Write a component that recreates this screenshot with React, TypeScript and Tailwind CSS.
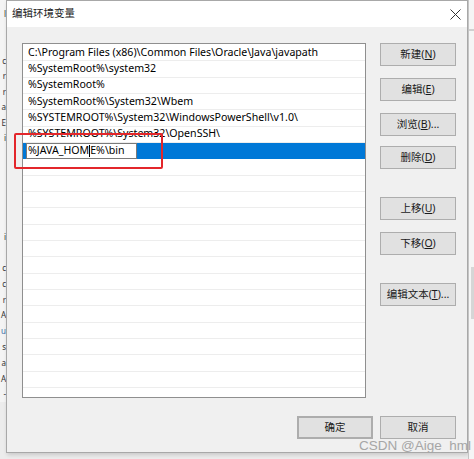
import React from "react"

const paths = [
  "C:\\Program Files (x86)\\Common Files\\Oracle\\Java\\javapath",
  "%SystemRoot%\\system32",
  "%SystemRoot%",
  "%SystemRoot%\\System32\\Wbem",
  "%SYSTEMROOT%\\System32\\WindowsPowerShell\\v1.0\\",
  "%SYSTEMROOT%\\System32\\OpenSSH\\",
]

const font = { fontFamily: '"Noto Sans", "Noto Sans CJK SC", sans-serif' }

function Btn({ children, className = "" }: { children: React.ReactNode; className?: string }) {
  return (
    <div
      className={`h-[23px] w-[76px] flex items-center justify-center bg-[#e1e1e1] border border-[#adadad] text-[10.5px] text-[#1a1a1a] ${className}`}
    >
      {children}
    </div>
  )
}

// slice of the window behind the dialog, only a few letters show
function LeftStrip() {
  const top = ["l", "", "", "c", "r", "r", "a", "E", "i"]
  const bottom = ["i", "", "c", "c", "r", "A", "u", "s", "a", "A", "-"]
  return (
    <div className="w-[6px] shrink-0 overflow-hidden flex flex-col items-end text-[8px] leading-[15.5px] text-[#333] bg-[#f4f4f4]">
      <div className="h-[6px]" />
      {top.map((t, i) => (
        <div key={i} className="h-[15.5px]">{t}</div>
      ))}
      <div className="h-[83px]" />
      {bottom.map((t, i) => (
        <div key={i} className={`h-[15.8px] ${t === "u" ? "text-[#3a6ea8]" : ""}`}>{t}</div>
      ))}
    </div>
  )
}

export default function App() {
  const rows = Array.from({ length: 21 }, (_, i) => i)
  return (
    <div className="relative w-[474px] h-[459px] overflow-hidden bg-[#ececec] flex items-start" style={font}>
      <LeftStrip />

      {/* dialog */}
      <div className="w-[462px] h-[453px] shrink-0 border border-[#a8a8a8] bg-[#f0f0f0] flex flex-col shadow-[1px_2px_4px_rgba(0,0,0,0.15)]">
        <div className="h-[26px] bg-white flex items-center justify-between pl-[5px] pr-[6px]">
          <span className="text-[10.5px] text-[#222]">编辑环境变量</span>
          <svg width="11" height="11" viewBox="0 0 11 11" className="text-[#333]">
            <path d="M0.5 0.5 L10.5 10.5 M10.5 0.5 L0.5 10.5" stroke="currentColor" strokeWidth="1" />
          </svg>
        </div>

        <div className="flex flex-col pt-[16px] pl-[15px] pr-[11px]">
          <div className="flex items-start">
            {/* path list */}
            <div className="w-[344px] h-[355px] border border-[#8f8f8f] bg-white pt-[1px] overflow-hidden">
              {rows.map((i) =>
                i === 6 ? (
                  <div key={i} className="h-[16.33px] bg-[#0078d7] flex items-center">
                    <div className="ml-[3px] w-[111px] h-[16px] bg-white border border-[#7a7a7a] flex items-center pl-[1px] text-[10.6px] text-black whitespace-nowrap">
                      %JAVA_HOM
                      <span className="inline-block w-px h-[12px] bg-black" />
                      E%\bin
                    </div>
                  </div>
                ) : (
                  <div
                    key={i}
                    className="h-[16.33px] border-b border-[#ededed] pl-[5px] flex items-center text-[10.6px] text-black whitespace-nowrap"
                  >
                    {paths[i] ?? ""}
                  </div>
                )
              )}
            </div>

            {/* side buttons */}
            <div className="ml-[14px] flex flex-col">
              <Btn>新建(<u>N</u>)</Btn>
              <Btn className="mt-[12px]">编辑(<u>E</u>)</Btn>
              <Btn className="mt-[12px]">浏览(<u>B</u>)...</Btn>
              <Btn className="mt-[10px]">删除(<u>D</u>)</Btn>
              <Btn className="mt-[28px]">上移(<u>U</u>)</Btn>
              <Btn className="mt-[12px]">下移(<u>O</u>)</Btn>
              <Btn className="mt-[28px]">编辑文本(<u>T</u>)...</Btn>
            </div>
          </div>

          <div className="mt-[18px] flex justify-end gap-[7px]">
            <Btn className="border-[#0078d7] border-2">确定</Btn>
            <Btn>取消</Btn>
          </div>
        </div>
      </div>

      {/* background window to the right */}
      <div className="flex-1 h-full bg-[#f5f5f5] border-l border-[#c4c4c4] flex flex-col">
        <div className="h-[29px]" />
        <div className="h-[2px] bg-[#d0d0d0]" />
        <div className="h-[236px]" />
        <div className="ml-[2px] w-[3px] h-[52px] bg-[#d6d6d6]" />
      </div>

      {/* red highlight */}
      <div className="absolute left-[14px] top-[133px] w-[149px] h-[36px] border-2 border-[#e3262b] rounded-[2px]" />

      {/* watermark */}
      <div
        className="absolute left-[359px] top-[436px] text-[13.5px] text-[#a6a6a6] whitespace-nowrap"
        style={{ fontFamily: '"Liberation Sans", Arial, sans-serif' }}
      >
        CSDN @Aige_hml
      </div>
    </div>
  )
}
